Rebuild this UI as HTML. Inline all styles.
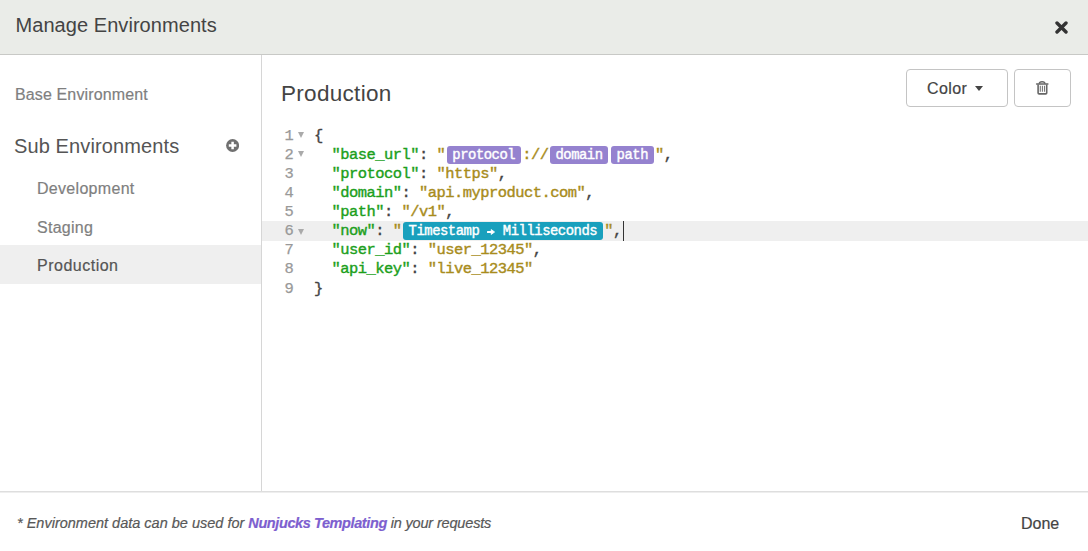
<!DOCTYPE html>
<html>
<head>
<meta charset="utf-8">
<style>
html,body{margin:0;padding:0;}
body{width:1088px;height:551px;overflow:hidden;position:relative;background:#fff;font-family:"Liberation Sans",sans-serif;color:#333;}
.abs{position:absolute;white-space:pre;line-height:1;}
.sf{-webkit-text-stroke:0.2px currentColor;}
#hdr{position:absolute;left:0;top:0;width:1088px;height:54px;background:#eaece8;border-bottom:1px solid #c8c9c6;}
#side{position:absolute;left:0;top:55px;width:261px;height:436px;border-right:1px solid #d6d6d6;}
#foot{position:absolute;left:0;top:491px;width:1088px;height:1px;background:#dedede;border-bottom:1px solid #eeeeee;}
.item{position:absolute;left:0;width:261px;height:39px;}
.item.active{background:#efefef;}
.btn{position:absolute;top:69px;height:36px;border:1px solid #c4c4c4;border-radius:4px;box-sizing:content-box;background:#fff;}
.code{-webkit-text-stroke:0.4px currentColor;position:absolute;left:0;top:0;font-family:"Liberation Mono",monospace;font-size:15.45px;letter-spacing:-0.52px;line-height:19.1px;white-space:pre;}
.ln{-webkit-text-stroke:0.25px currentColor;position:absolute;white-space:pre;left:284.5px;color:#999;font-family:"Liberation Mono",monospace;font-size:15.45px;line-height:19.1px;}
.k{color:#1c9f1c;}
.v{color:#a88c1c;}
.p{color:#444;}
.tag{display:inline-block;font-size:13.9px;letter-spacing:-0.48px;line-height:18px;height:18px;padding:0 5.55px;margin:0 1.48px;border-radius:3px;color:#fff;vertical-align:top;position:relative;top:-0.4px;}
.pur{background:#9582cf;}
.teal{background:#19a0bd;}
.fold{position:absolute;left:298px;width:0;height:0;border-left:3px solid transparent;border-right:3px solid transparent;border-top:6.2px solid #aaa;}
</style>
</head>
<body>
<div id="hdr"></div>
<div class="abs" style="left:15.5px;top:15px;font-size:20px;letter-spacing:0.06px;color:#444;">Manage Environments</div>
<svg style="position:absolute;left:1055px;top:20.5px" width="13" height="13" viewBox="0 0 13 13"><path d="M2 2 L11 11 M11 2 L2 11" stroke="#333" stroke-width="3.4" stroke-linecap="round"/></svg>

<div id="side"></div>
<div class="abs sf" style="left:15px;top:87px;font-size:16px;letter-spacing:0.13px;color:#7f7f7f;">Base Environment</div>
<div class="abs" style="left:14px;top:136px;font-size:20px;letter-spacing:0.12px;color:#555;">Sub Environments</div>
<svg style="position:absolute;left:226px;top:139px" width="13" height="13" viewBox="0 0 13 13"><circle cx="6.6" cy="6.5" r="6.5" fill="#707070"/><path d="M6.6 2.7V10.3M2.8 6.5H10.4" stroke="#fff" stroke-width="2.5"/></svg>
<div class="item" style="top:167px"></div>
<div class="item" style="top:206px"></div>
<div class="item active" style="top:245px"></div>
<div class="abs sf" style="left:37px;top:181px;font-size:16px;letter-spacing:0.3px;color:#7f7f7f;">Development</div>
<div class="abs sf" style="left:37px;top:220px;font-size:16px;letter-spacing:0.28px;color:#7f7f7f;">Staging</div>
<div class="abs sf" style="left:37px;top:258px;font-size:16px;letter-spacing:0.5px;color:#555;">Production</div>

<div class="abs" style="left:281px;top:83px;font-size:22.5px;letter-spacing:0.3px;color:#444;">Production</div>
<div class="btn" style="left:906px;width:100px;"></div>
<div class="abs sf" style="left:927px;top:80.5px;font-size:16px;letter-spacing:0.4px;color:#444;">Color</div>
<div style="position:absolute;left:975px;top:86px;width:0;height:0;border-left:4.6px solid transparent;border-right:4.6px solid transparent;border-top:5.2px solid #444;"></div>
<div class="btn" style="left:1013.5px;width:55.5px;"></div>
<svg style="position:absolute;left:1030px;top:76px" width="26" height="24" viewBox="0 0 26 24"><path d="M9.3 7.8Q9.3 5.7 12.1 5.7Q14.9 5.7 14.9 7.8" stroke="#666" stroke-width="1.4" fill="none"/><path d="M6.6 8H17.9" stroke="#666" stroke-width="1.5" stroke-linecap="round"/><path d="M8.1 8.6V16.9Q8.1 17.9 9.1 17.9H15.7Q16.7 17.9 16.7 16.9V8.6" stroke="#666" stroke-width="1.6" fill="none"/><path d="M10.3 9.8V15.8M12.4 9.8V15.8M14.5 9.8V15.8" stroke="#777" stroke-width="1.1"/></svg>

<!-- code -->
<div style="position:absolute;left:262px;top:221px;width:826px;height:19.6px;background:#efefef;"></div>
<div class="ln" style="top:126.8px">1
2
3
4
5
6
7
8
9</div>
<div class="fold" style="top:132px"></div>
<div class="fold" style="top:151.1px"></div>
<div class="fold" style="top:228.5px"></div>
<div class="code" style="left:314.1px;top:126.8px"><span class="p">{</span>
  <span class="k">"base_url"</span><span class="p">: </span><span class="v">"</span><span class="tag pur">protocol</span><span class="v">://</span><span class="tag pur">domain</span><span class="tag pur">path</span><span class="v">"</span><span class="p">,</span>
  <span class="k">"protocol"</span><span class="p">: </span><span class="v">"https"</span><span class="p">,</span>
  <span class="k">"domain"</span><span class="p">: </span><span class="v">"api.myproduct.com"</span><span class="p">,</span>
  <span class="k">"path"</span><span class="p">: </span><span class="v">"/v1"</span><span class="p">,</span>
  <span class="k">"now"</span><span class="p">: </span><span class="v">"</span><span class="tag teal">Timestamp <svg style="vertical-align:top" width="7.86" height="18" viewBox="0 0 7.86 18"><path d="M0.8 10H4.6" stroke="#fff" stroke-width="2.2" stroke-linecap="round"/><path d="M4.2 7.5L7.6 10L4.2 12.5Z" fill="#fff" stroke="#fff" stroke-width="0.8" stroke-linejoin="round"/></svg> Milliseconds</span><span class="v">"</span><span class="p">,</span>
  <span class="k">"user_id"</span><span class="p">: </span><span class="v">"user_12345"</span><span class="p">,</span>
  <span class="k">"api_key"</span><span class="p">: </span><span class="v">"live_12345"</span>
<span class="p">}</span></div>
<div style="position:absolute;left:622.5px;top:221px;width:1px;height:19.5px;background:#333;"></div>

<div id="foot"></div>
<div class="abs sf" style="left:17px;top:516px;font-size:14.5px;font-style:italic;color:#585858;">* Environment data can be used for <span style="color:#7d5fcf;font-weight:bold;letter-spacing:-0.4px">Nunjucks Templating</span><span style="letter-spacing:-0.17px"> in your requests</span></div>
<div class="abs sf" style="left:1021px;top:516px;font-size:16px;color:#444;">Done</div>
</body>
</html>
